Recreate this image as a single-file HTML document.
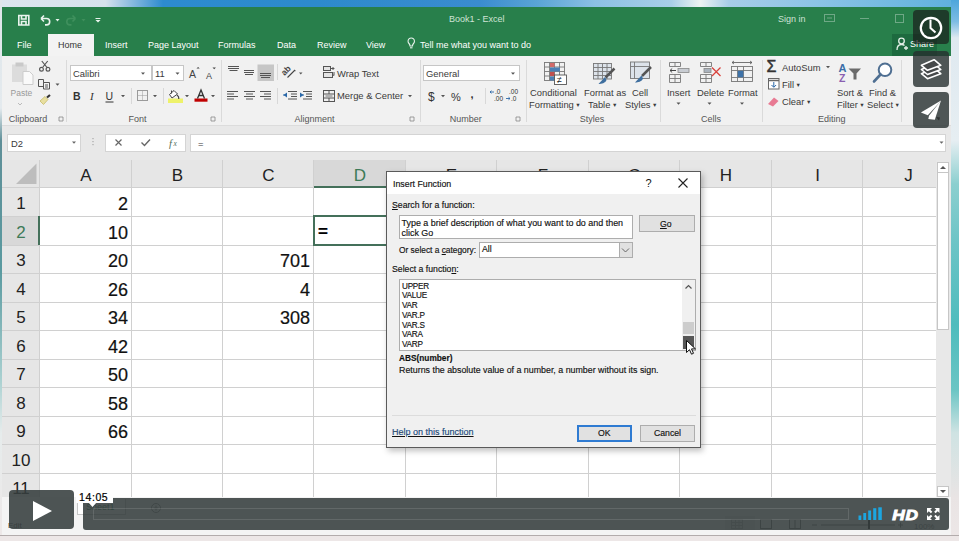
<!DOCTYPE html>
<html><head><meta charset="utf-8">
<style>
*{margin:0;padding:0;box-sizing:border-box}
html,body{width:959px;height:541px;overflow:hidden;background:#f4eeee;font-family:"Liberation Sans",sans-serif;position:relative}
.a{position:absolute}
.t{position:absolute;white-space:nowrap;line-height:1}
#bg{left:0;top:0;width:959px;height:541px;background:linear-gradient(90deg,#dce6ee 0%,#d6e2ec 11%,#2d8bcf 17%,#2d8acc 33%,#3a8ccf 50%,#5aa4d6 56%,#8cc0e4 62%,#a9cfe8 70%,#eef3f2 73%,#a8cde8 76%,#8cc4e6 85%,#5db0dd 100%)}
#rbg{left:951px;top:0;width:8px;height:541px;background:linear-gradient(180deg,#4da6dc 0%,#7dbce4 4%,#dfe9f0 7%,#e6eef2 26%,#8ccfcf 34%,#6cc4c6 45%,#4fbcbd 60%,#6ac5c4 72%,#cfe3e3 80%,#e9e4e4 92%,#ede7e7 100%)}
#bot{left:0;top:534.5px;width:959px;height:7px;background:#ede7e7;border-top:1px solid #b3acac}
#title{left:2px;top:7px;width:949px;height:49px;background:#287f4b}
.wt{color:#fff;font-size:9px}
#ribbon{left:2px;top:56px;width:949px;height:70px;background:#f1f1f1;border-bottom:1px solid #dcdcdc}
#fbar{left:2px;top:126px;width:949px;height:34px;background:#e8e8e8}
#grid{left:2px;top:160px;width:934px;height:337px;background:#fff}
.rt{color:#3a3a3a;font-size:9.4px}
.grp{color:#555;font-size:9px}
.sep{position:absolute;width:1px;background:#dadada}
.hdr{position:absolute;background:#e6e6e6}
.vl{position:absolute;width:1px;background:#d0d0d0}
.hl{position:absolute;height:1px;background:#d0d0d0}
.num{position:absolute;font-size:18px;color:#111;line-height:1;white-space:nowrap;-webkit-text-stroke:0.2px #111}
.dt{position:absolute;font-size:8.7px;color:#111;-webkit-text-stroke:0.15px #111;line-height:1;white-space:nowrap}
</style></head><body>
<div id="bg" class="a"></div>
<div class="a" style="left:0;top:0;width:2px;height:541px;background:linear-gradient(180deg,#dfe6ea 0%,#e4eaee 20%,#5f8f98 26%,#5a9aa0 50%,#a9d0d0 70%,#e6ecec 80%,#eee8e8 100%)"></div>
<div id="rbg" class="a"></div>
<div id="bot" class="a"></div>

<!-- title bar -->
<div id="title" class="a"></div>
<div class="a" style="left:48px;top:34px;width:46px;height:22px;background:#f3f3f3"></div>
<div class="t wt" style="left:17px;top:41px">File</div>
<div class="t" style="left:58px;top:41px;font-size:9px;color:#333">Home</div>
<div class="t wt" style="left:105px;top:41px">Insert</div>
<div class="t wt" style="left:148px;top:41px">Page Layout</div>
<div class="t wt" style="left:218px;top:41px">Formulas</div>
<div class="t wt" style="left:277px;top:41px">Data</div>
<div class="t wt" style="left:317px;top:41px">Review</div>
<div class="t wt" style="left:366px;top:41px">View</div>
<div class="t wt" style="left:420px;top:41px">Tell me what you want to do</div>
<div class="t wt" style="left:449px;top:15px;color:#cfe3d6">Book1 - Excel</div>
<div class="t wt" style="left:778px;top:15px;color:#cfe3d6">Sign in</div>
<div class="a" style="left:892px;top:34px;width:45px;height:22px;background:#1d6a3f"></div>
<div class="t wt" style="left:910px;top:40px">Share</div>

<!-- ribbon -->
<div id="ribbon" class="a"></div>
<div class="sep" style="left:66px;top:60px;height:62px"></div>
<div class="sep" style="left:221px;top:60px;height:62px"></div>
<div class="sep" style="left:420px;top:60px;height:62px"></div>
<div class="sep" style="left:526px;top:60px;height:62px"></div>
<div class="sep" style="left:660px;top:60px;height:62px"></div>
<div class="sep" style="left:762px;top:60px;height:62px"></div>
<div class="sep" style="left:901px;top:60px;height:62px"></div>
<div class="t grp" style="left:-22px;width:100px;text-align:center;top:114.5px">Clipboard</div>
<div class="t grp" style="left:87.5px;width:100px;text-align:center;top:114.5px">Font</div>
<div class="t grp" style="left:264.4px;width:100px;text-align:center;top:114.5px">Alignment</div>
<div class="t grp" style="left:415.8px;width:100px;text-align:center;top:114.5px">Number</div>
<div class="t grp" style="left:542px;width:100px;text-align:center;top:114.5px">Styles</div>
<div class="t grp" style="left:661px;width:100px;text-align:center;top:114.5px">Cells</div>
<div class="t grp" style="left:781.7px;width:100px;text-align:center;top:114.5px">Editing</div>
<div class="a" style="left:70px;top:65px;width:82px;height:16px;background:#fff;border:1px solid #c6c6c6"></div>
<div class="a" style="left:152px;top:65px;width:32px;height:16px;background:#fff;border:1px solid #c6c6c6"></div>
<div class="t rt" style="left:73px;top:69px">Calibri</div>
<div class="t rt" style="left:155px;top:69px">11</div>
<div class="a" style="left:423px;top:65px;width:97px;height:16px;background:#fff;border:1px solid #c6c6c6"></div>
<div class="t rt" style="left:426px;top:69px">General</div>
<div class="t rt" style="left:337px;top:69px">Wrap Text</div>
<div class="t rt" style="left:337px;top:91px">Merge &amp; Center</div>
<div class="t rt" style="left:10.5px;top:89px;color:#999;font-size:8.5px">Paste</div>
<div class="t rt" style="left:530px;top:88px">Conditional</div>
<div class="t rt" style="left:529px;top:100px">Formatting<span style="font-size:5.5px;vertical-align:1.5px"> ▼</span></div>
<div class="t rt" style="left:584px;top:88px">Format as</div>
<div class="t rt" style="left:588px;top:100px">Table<span style="font-size:5.5px;vertical-align:1.5px"> ▼</span></div>
<div class="t rt" style="left:632px;top:88px">Cell</div>
<div class="t rt" style="left:625px;top:100px">Styles<span style="font-size:5.5px;vertical-align:1.5px"> ▼</span></div>
<div class="t rt" style="left:667px;top:88px">Insert</div>
<div class="t rt" style="left:697px;top:88px">Delete</div>
<div class="t rt" style="left:728px;top:88px">Format</div>
<div class="t rt" style="left:782px;top:63px">AutoSum</div>
<div class="t rt" style="left:782px;top:80px">Fill<span style="font-size:5.5px;vertical-align:1.5px"> ▼</span></div>
<div class="t rt" style="left:782px;top:97px">Clear<span style="font-size:5.5px;vertical-align:1.5px"> ▼</span></div>
<div class="t rt" style="left:837px;top:88px">Sort &amp;</div>
<div class="t rt" style="left:837px;top:100px">Filter<span style="font-size:5.5px;vertical-align:1.5px"> ▼</span></div>
<div class="t rt" style="left:869px;top:88px">Find &amp;</div>
<div class="t rt" style="left:867px;top:100px">Select<span style="font-size:5.5px;vertical-align:1.5px"> ▼</span></div>

<!-- formula bar -->
<div id="fbar" class="a"></div>
<div class="a" style="left:7px;top:134px;width:74px;height:18px;background:#fff;border:1px solid #d4d4d4"></div>
<div class="t rt" style="left:11px;top:139px">D2</div>
<div class="a" style="left:105px;top:134px;width:81px;height:18px;background:#fff;border:1px solid #d4d4d4"></div>
<div class="a" style="left:190px;top:134px;width:756px;height:18px;background:#fff;border:1px solid #d4d4d4"></div>
<div class="t rt" style="left:198px;top:139px">=</div>

<svg class="a" style="left:0;top:0" width="959" height="160" viewBox="0 0 959 160">
<g fill="none" stroke="#eaf4ee" stroke-width="1.6">
 <!-- save -->
 <path d="M18.8 15.5h10v9.5h-10z"/>
 <path d="M21.5 15.5v3.5h4.5v-3.5M21.5 25v-3.5h4.5v3.5"/>
 <!-- undo -->
 <path d="M41 18.5l3-3M41 18.5l3 3M41.5 18.5h5a3.2 3.2 0 0 1 0 6.4h-1.5"/>
</g>
<path d="M55.5 19h4l-2 2.5z" fill="#eaf4ee"/>
<g fill="none" stroke="#3f905d" stroke-width="1.6">
 <path d="M75.5 18.5l-3-3M75.5 18.5l-3 3M75 18.5h-5a3.2 3.2 0 0 0 0 6.4h1.5"/>
</g>
<path d="M81.5 19h4l-2 2.5z" fill="#3f8f5c"/>
<path d="M95.5 18h5v1h-5zM95.5 20h5l-2.5 2.5z" fill="#eaf4ee"/>
<!-- window controls -->
<g fill="none" stroke="#6fa886" stroke-width="1">
 <rect x="824.5" y="14.5" width="10" height="7"/>
 <path d="M827 18h5"/>
 <path d="M860 18.5h9"/>
 <rect x="895.5" y="14.5" width="8" height="8"/>
</g>
<!-- share person -->
<g fill="none" stroke="#e3efe7" stroke-width="1.3">
 <circle cx="901.5" cy="41" r="2.8"/>
 <path d="M897 50c0-3.5 2-5.5 4.5-5.5 1.5 0 2.5.5 3 1"/>
 <path d="M904 48h4M906 46v4"/>
</g>
<!-- lightbulb -->
<g fill="none" stroke="#eaf4ee" stroke-width="1.1">
 <path d="M409 43.5a3.2 3.2 0 1 1 4.5 0c-.8.8-1 1.5-1 2.5h-2.5c0-1-.2-1.7-1-2.5z"/>
 <path d="M410 47.8h2.5"/>
</g>

<!-- CLIPBOARD -->
<rect x="12" y="64.5" width="15" height="17.5" fill="#dcdcdc"/>
<rect x="15.5" y="62.5" width="8" height="4" fill="#c9c9c9"/>
<path d="M23 71.5h6.5l3.5 3.5v9.5h-10z" fill="#fafafa" stroke="#cdcdcd" stroke-width="1"/>
<path d="M18 103l2 2 2-2" fill="none" stroke="#bbb" stroke-width="1"/>
<g fill="none" stroke="#555" stroke-width="1.2">
 <circle cx="41.5" cy="69.3" r="1.9"/><circle cx="48" cy="69.3" r="1.9"/>
 <path d="M42.5 67.5l5.2-6.5M47 67.5l-5.2-6.5"/>
</g>
<g fill="none" stroke="#555" stroke-width="1">
 <path d="M38.5 79.5h5v7h-5z"/>
 <path d="M43.5 82.5h6v6.5h-6z" fill="#f3f3f3"/>
 <path d="M45 85h3M45 87h3"/>
</g>
<path d="M55.5 83.5h4l-2 2.2z" fill="#555"/>
<path d="M40 101l5-4.5 3 3-4.5 5z" fill="#e8dfa0" stroke="#c7bb6a" stroke-width=".8"/>
<path d="M47 97.5l3-2.5" stroke="#333" stroke-width="2.2"/>

<!-- FONT -->
<path d="M141 72.5h4l-2 2.2zM175.5 72.5h4l-2 2.2z" fill="#555"/>
<text x="189" y="78" font-family="Liberation Sans" font-size="10.5" fill="#444">A</text>
<path d="M196.5 68.5l1.6-1.6 1.6 1.6z" fill="#444"/>
<text x="206" y="78.5" font-family="Liberation Sans" font-size="9" fill="#444">A</text>
<path d="M212.5 67.5h3.4l-1.7 1.7z" fill="#444"/>
<text x="73" y="100" font-family="Liberation Sans" font-size="10.5" font-weight="bold" fill="#333">B</text>
<text x="90" y="100" font-family="Liberation Serif" font-size="11" font-style="italic" fill="#333">I</text>
<text x="105.5" y="99.5" font-family="Liberation Sans" font-size="10.5" fill="#333">U</text>
<path d="M105.5 102h8" stroke="#333" stroke-width="1"/>
<path d="M121 95h4l-2 2.2zM153 95h4l-2 2.2zM185 95h4l-2 2.2zM211 95h4l-2 2.2z" fill="#555"/>
<path d="M131.5 88v16M163.5 88v16" stroke="#d8d8d8" stroke-width="1"/>
<g fill="none" stroke="#9a9a9a" stroke-width="1">
 <rect x="137.5" y="90.5" width="10" height="10"/>
 <path d="M142.5 90.5v10M137.5 95.5h10" stroke-dasharray="1 1"/>
</g>
<rect x="168" y="98.5" width="15" height="4.5" fill="#eef26a"/>
<path d="M172 98l-2.5-3.5 4.5-4 3.5 3.5z" fill="#fff" stroke="#444" stroke-width="1"/>
<path d="M171.5 90.5v3" stroke="#444" stroke-width="1"/>
<path d="M177 95c1.5 1 2 2.5 1.8 4" fill="none" stroke="#444" stroke-width="1.2"/>
<rect x="194.5" y="98.5" width="13" height="3.2" fill="#c00000"/>
<path d="M197.5 98.5l3.5-8.5 3.5 8.5M198.8 95.5h4.5" fill="none" stroke="#333" stroke-width="1.3"/>
<path d="M211 117h4v4h-4z" fill="none" stroke="#888" stroke-width=".8"/>
<path d="M59 117h4v4h-4z" fill="none" stroke="#888" stroke-width=".8"/>

<!-- ALIGNMENT -->
<rect x="257.5" y="64.5" width="16.5" height="16.5" fill="#c6c6c6"/>
<g stroke="#555" stroke-width="1">
 <path d="M228 66.5h11M228 68.5h11M229.5 70.5h8"/>
 <path d="M244 70.5h10M244 72.5h10M245 74.5h8"/>
 <path d="M260 73.5h11M260 75.5h11M261 77.5h9"/>
 <path d="M227 91.5h11M227 94h7M227 96.5h11M227 99h7"/>
 <path d="M244 91.5h11M246 94h7M244 96.5h11M246 99h7"/>
 <path d="M260 91.5h11M264 94h7M260 96.5h11M264 99h7"/>
 <path d="M288 91.5h9M291 94h6M291 96.5h6M288 99h9"/>
 <path d="M303 91.5h9M306 94h6M306 96.5h6M303 99h9"/>
</g>
<path d="M283.5 95l3.5-2.5v5zM300 92.5l3.5 2.5-3.5 2.5z" fill="#2b68a8"/>
<path d="M283 95h4M300 95h4" stroke="#2b68a8" stroke-width="1"/>
<path d="M277.5 64v16M277.5 88v16" stroke="#d8d8d8"/>
<text x="0" y="0" font-family="Liberation Sans" font-size="8.5" font-weight="bold" fill="#444" transform="translate(284.5 76) rotate(-45)">ab</text>
<path d="M287.5 77.5l7.5-7.5" stroke="#444" stroke-width="1.1"/>
<path d="M294.5 70.8l1.2-.5-.5 1.2z" fill="#444"/>
<path d="M299 72.5h3.5l-1.75 2z" fill="#555"/>
<path d="M408 95h4l-2 2.2z" fill="#555"/>
<g fill="none" stroke="#555" stroke-width="1">
 <rect x="323.5" y="66.5" width="7" height="4" fill="#e4e4e4"/>
 <rect x="323.5" y="72.5" width="9" height="5" fill="#e4e4e4"/>
 <path d="M331 68.5h3M332.5 67l1.5 1.5-1.5 1.5"/>
 <path d="M334 72v3.5l-1.5-1"/>
 <rect x="323.5" y="90.5" width="11" height="11"/>
 <path d="M323.5 94h11M323.5 98h11M329 90.5v3.5M329 98v3.5"/>
 <path d="M325.5 96h7" stroke-width=".8"/>
</g>
<path d="M410 117h4v4h-4zM516 117h4v4h-4z" fill="none" stroke="#888" stroke-width=".8"/>

<!-- NUMBER -->
<path d="M511 72.5h4l-2 2.2z" fill="#555"/>
<text x="428" y="101" font-family="Liberation Sans" font-size="12" fill="#333">$</text>
<path d="M441 95h4l-2 2.2z" fill="#555"/>
<text x="451" y="100.5" font-family="Liberation Sans" font-size="11" fill="#333">%</text>
<text x="470.5" y="98" font-family="Liberation Sans" font-size="11" font-weight="bold" fill="#333">,</text>
<path d="M485.5 88v16" stroke="#d8d8d8"/>
<text x="495" y="94" font-family="Liberation Sans" font-size="6.5" fill="#333">.0</text>
<text x="494" y="100.5" font-family="Liberation Sans" font-size="6.5" fill="#333">.00</text>
<path d="M490 92h4M490 92l1.5-1.3M490 92l1.5 1.3" stroke="#2b68a8" stroke-width=".9" fill="none"/>
<text x="509" y="94" font-family="Liberation Sans" font-size="6.5" fill="#333">.00</text>
<text x="511" y="100.5" font-family="Liberation Sans" font-size="6.5" fill="#333">.0</text>
<path d="M506 98.5h4M510 98.5l-1.5-1.3M510 98.5l-1.5 1.3" stroke="#2b68a8" stroke-width=".9" fill="none"/>

<!-- STYLES -->
<g fill="none" stroke="#777" stroke-width=".9">
 <rect x="544.5" y="62.5" width="20" height="18"/>
 <path d="M544.5 67h20M544.5 71.5h20M544.5 76h20M549.5 62.5v18M554.5 62.5v18M559.5 62.5v18"/>
</g>
<rect x="550" y="63" width="4.5" height="4" fill="#d26a6a"/>
<rect x="550" y="67.5" width="10" height="4" fill="#4c7fb5"/>
<rect x="550" y="72" width="4.5" height="4" fill="#c05050"/>
<rect x="550" y="76.5" width="4.5" height="4" fill="#4c7fb5"/>
<rect x="554.5" y="75" width="12" height="9.5" fill="#fff" stroke="#555" stroke-width=".9"/>
<text x="557" y="83" font-family="Liberation Sans" font-size="9" fill="#222">≠</text>
<g fill="none" stroke="#777" stroke-width=".9">
 <rect x="593.5" y="63.5" width="18" height="15.5" fill="#dde3ea"/>
 <path d="M593.5 67.5h18M593.5 71.5h18M593.5 75.5h18M598 63.5v15.5M602.5 63.5v15.5M607 63.5v15.5"/>
 <rect x="630.5" y="62" width="19" height="16.5" fill="#dde3ea"/>
 <path d="M630.5 66.5h19M634.5 62v16.5"/>
</g>
<path d="M614.5 68.5l-9 9" stroke="#555" stroke-width="2.5"/>
<path d="M605 77l-6.5 7c3 0 7-1 8-4z" fill="#3f6f9f"/>
<path d="M651 67l-9 9" stroke="#555" stroke-width="2.5"/>
<path d="M641.5 75.5l-6.5 7c3 0 7-1 8-4z" fill="#3f6f9f"/>


<!-- CELLS -->
<g fill="none" stroke="#777" stroke-width=".9">
 <path d="M669.5 62.5h11v4h-11zM675 62.5v4"/>
 <path d="M669.5 74.5h11v8h-11zM675 74.5v8M669.5 78.5h11"/>
 <path d="M700.5 62.5h11v4h-11zM706 62.5v4"/>
 <path d="M700.5 74.5h11v8h-11zM706 74.5v8M700.5 78.5h11"/>
 <rect x="731.5" y="66.5" width="21" height="15"/>
 <path d="M731.5 70.5h21M731.5 77.5h21M737.5 66.5v15M743.5 66.5v15"/>
</g>
<rect x="678" y="68.5" width="11" height="4" fill="#c8ccd2" stroke="#888" stroke-width=".8"/>
<path d="M670 70.5h6M670 70.5l2.2-2M670 70.5l2.2 2" stroke="#444" stroke-width="1" fill="none"/>
<rect x="704" y="68.5" width="7" height="4" fill="#aab3bd" stroke="#888" stroke-width=".8"/>
<path d="M712 67.5l8.5 8.5M720.5 67.5l-8.5 8.5" stroke="#d9423c" stroke-width="1.3"/>
<rect x="737.8" y="70.8" width="5.5" height="6.5" fill="#3e72a8"/>
<path d="M732 62.5h20M732 62.5l2-1.5M732 62.5l2 1.5M752 62.5l-2-1.5M752 62.5l-2 1.5" stroke="#555" stroke-width=".8" fill="none"/>
<path d="M676.5 102.5h4l-2 2.2zM707.5 102.5h4l-2 2.2zM740 102.5h4l-2 2.2z" fill="#555"/>

<!-- EDITING -->
<text x="766.5" y="72" font-family="Liberation Sans" font-size="16" fill="#333" stroke="#333" stroke-width="0.5">Σ</text>
<path d="M826 66h4l-2 2.2z" fill="#555"/>
<rect x="768.5" y="78.5" width="10.5" height="10.5" fill="#fff" stroke="#666" stroke-width="1"/>
<path d="M768.5 80.5h10.5" stroke="#666" stroke-width="1.5"/>
<path d="M773.8 82v5M771.5 85l2.3 2.3 2.3-2.3" stroke="#2b68a8" stroke-width="1" fill="none"/>
<path d="M768 104l6-6.5 4.5 3.5-5.5 5.5z" fill="#e87a93"/>
<text x="838.5" y="71.5" font-family="Liberation Sans" font-size="11" font-weight="bold" fill="#3a6ea8">A</text>
<text x="839" y="81.5" font-family="Liberation Sans" font-size="10.5" font-weight="bold" fill="#8a5fb0">Z</text>
<path d="M848.5 68.5h12.5l-4.5 5v6l-3 0v-6z" fill="#6b6b6b"/>
<circle cx="885" cy="69.8" r="6.3" fill="#fff" stroke="#4f6f92" stroke-width="2"/>
<path d="M880.5 74.5l-6.5 7" stroke="#4f6f92" stroke-width="2.6" stroke-linecap="round"/>

<!-- formula bar icons -->
<path d="M72 141.5h4l-2 2.2z" fill="#666"/>
<path d="M93 138v1.2M93 141v1.2M93 144v1.2" stroke="#999" stroke-width="1"/>
<path d="M115.5 139.5l6 6M121.5 139.5l-6 6" stroke="#666" stroke-width="1.2"/>
<path d="M141.5 142.5l3 3 5.5-6" fill="none" stroke="#666" stroke-width="1.4"/>
<text x="169" y="146.5" font-family="Liberation Serif" font-size="10.5" font-style="italic" fill="#4f6f5c">f</text>
<text x="173.5" y="146" font-family="Liberation Serif" font-size="7.5" font-style="italic" fill="#4f6f5c">x</text>
<path d="M939.5 141.5h4l-2 2.2z" fill="#666"/>
<!-- corner triangle -->
<path d="M36 167v17h-17z" fill="#bdbdbd"/>
</svg>

<!-- grid -->
<div id="grid" class="a"></div>
<div class="hdr" style="left:2px;top:160px;width:934px;height:27px"></div>
<div class="hdr" style="left:2px;top:187px;width:38px;height:310px"></div>
<div class="a" style="left:314px;top:160px;width:92px;height:27px;background:#d8d8d8"></div>
<div class="a" style="left:2px;top:216px;width:38px;height:29px;background:#d8d8d8"></div>
<div class="vl" style="left:39px;top:160px;height:337px"></div>
<div class="vl" style="left:131px;top:160px;height:337px"></div>
<div class="vl" style="left:222px;top:160px;height:337px"></div>
<div class="vl" style="left:313px;top:160px;height:337px"></div>
<div class="vl" style="left:405px;top:160px;height:337px"></div>
<div class="vl" style="left:496px;top:160px;height:337px"></div>
<div class="vl" style="left:588px;top:160px;height:337px"></div>
<div class="vl" style="left:679px;top:160px;height:337px"></div>
<div class="vl" style="left:771px;top:160px;height:337px"></div>
<div class="vl" style="left:862px;top:160px;height:337px"></div>
<div class="hl" style="left:2px;top:187px;width:934px"></div>
<div class="hl" style="left:2px;top:216px;width:934px"></div>
<div class="hl" style="left:2px;top:245px;width:934px"></div>
<div class="hl" style="left:2px;top:273px;width:934px"></div>
<div class="hl" style="left:2px;top:302px;width:934px"></div>
<div class="hl" style="left:2px;top:330px;width:934px"></div>
<div class="hl" style="left:2px;top:359px;width:934px"></div>
<div class="hl" style="left:2px;top:387px;width:934px"></div>
<div class="hl" style="left:2px;top:416px;width:934px"></div>
<div class="hl" style="left:2px;top:444px;width:934px"></div>
<div class="hl" style="left:2px;top:473px;width:934px"></div>
<div class="hl" style="left:2px;top:501px;width:934px"></div>
<div class="num" style="left:46.0px;width:80px;text-align:center;top:167.0px;font-size:17px;-webkit-text-stroke:0;color:#222">A</div>
<div class="num" style="left:137.5px;width:80px;text-align:center;top:167.0px;font-size:17px;-webkit-text-stroke:0;color:#222">B</div>
<div class="num" style="left:228.5px;width:80px;text-align:center;top:167.0px;font-size:17px;-webkit-text-stroke:0;color:#222">C</div>
<div class="num" style="left:320.0px;width:80px;text-align:center;top:167.0px;font-size:17px;-webkit-text-stroke:0;color:#3d7a57">D</div>
<div class="num" style="left:411.5px;width:80px;text-align:center;top:167.0px;font-size:17px;-webkit-text-stroke:0;color:#222">E</div>
<div class="num" style="left:503.0px;width:80px;text-align:center;top:167.0px;font-size:17px;-webkit-text-stroke:0;color:#222">F</div>
<div class="num" style="left:594.5px;width:80px;text-align:center;top:167.0px;font-size:17px;-webkit-text-stroke:0;color:#222">G</div>
<div class="num" style="left:686.0px;width:80px;text-align:center;top:167.0px;font-size:17px;-webkit-text-stroke:0;color:#222">H</div>
<div class="num" style="left:777.5px;width:80px;text-align:center;top:167.0px;font-size:17px;-webkit-text-stroke:0;color:#222">I</div>
<div class="num" style="left:868.5px;width:80px;text-align:center;top:167.0px;font-size:17px;-webkit-text-stroke:0;color:#222">J</div>
<div class="num" style="left:2px;width:38px;text-align:center;top:194.5px;font-size:17px;-webkit-text-stroke:0;color:#222">1</div>
<div class="num" style="left:2px;width:38px;text-align:center;top:223.5px;font-size:17px;-webkit-text-stroke:0;color:#3d7a57">2</div>
<div class="num" style="left:2px;width:38px;text-align:center;top:252.0px;font-size:17px;-webkit-text-stroke:0;color:#222">3</div>
<div class="num" style="left:2px;width:38px;text-align:center;top:280.5px;font-size:17px;-webkit-text-stroke:0;color:#222">4</div>
<div class="num" style="left:2px;width:38px;text-align:center;top:309.0px;font-size:17px;-webkit-text-stroke:0;color:#222">5</div>
<div class="num" style="left:2px;width:38px;text-align:center;top:337.5px;font-size:17px;-webkit-text-stroke:0;color:#222">6</div>
<div class="num" style="left:2px;width:38px;text-align:center;top:366.0px;font-size:17px;-webkit-text-stroke:0;color:#222">7</div>
<div class="num" style="left:2px;width:38px;text-align:center;top:394.5px;font-size:17px;-webkit-text-stroke:0;color:#222">8</div>
<div class="num" style="left:2px;width:38px;text-align:center;top:423.0px;font-size:17px;-webkit-text-stroke:0;color:#222">9</div>
<div class="num" style="left:2px;width:38px;text-align:center;top:451.5px;font-size:17px;-webkit-text-stroke:0;color:#222">10</div>
<div class="num" style="left:2px;width:38px;text-align:center;top:480.0px;font-size:17px;-webkit-text-stroke:0;color:#222">11</div>
<div class="num" style="left:40px;width:88px;text-align:right;top:194.5px">2</div>
<div class="num" style="left:40px;width:88px;text-align:right;top:223.5px">10</div>
<div class="num" style="left:40px;width:88px;text-align:right;top:252.0px">20</div>
<div class="num" style="left:40px;width:88px;text-align:right;top:280.5px">26</div>
<div class="num" style="left:40px;width:88px;text-align:right;top:309.0px">34</div>
<div class="num" style="left:40px;width:88px;text-align:right;top:337.5px">42</div>
<div class="num" style="left:40px;width:88px;text-align:right;top:366.0px">50</div>
<div class="num" style="left:40px;width:88px;text-align:right;top:394.5px">58</div>
<div class="num" style="left:40px;width:88px;text-align:right;top:423.0px">66</div>
<div class="num" style="left:223px;width:87px;text-align:right;top:252.0px">701</div>
<div class="num" style="left:223px;width:87px;text-align:right;top:280.5px">4</div>
<div class="num" style="left:223px;width:87px;text-align:right;top:309.0px">308</div>

<div class="a" style="left:314px;top:185.5px;width:92px;height:2px;background:#44705a"></div>
<div class="a" style="left:38px;top:216px;width:2px;height:29px;background:#44705a"></div>
<svg class="a" style="left:0;top:160px" width="40" height="27"><path d="M36.5 3.5v20.5h-20.5z" fill="#bdbdbd"/></svg>
<!-- vertical scrollbar -->
<div class="a" style="left:936px;top:152px;width:15px;height:345px;background:#e8e8e8"></div>
<div class="a" style="left:937px;top:162px;width:12px;height:11px;background:#fff;border:1px solid #c6c6c6"></div>
<svg class="a" style="left:937px;top:162px" width="12" height="11"><path d="M3 7l3-3 3 3z" fill="#555"/></svg>
<div class="a" style="left:937px;top:173px;width:12px;height:157px;background:#fff;border:1px solid #c6c6c6;border-top:none"></div>
<div class="a" style="left:937px;top:486px;width:12px;height:11px;background:#fff;border:1px solid #c6c6c6"></div>
<svg class="a" style="left:937px;top:486px" width="12" height="11"><path d="M3 4l3 3 3-3z" fill="#555"/></svg>

<!-- selected cell -->
<div class="a" style="left:313px;top:215px;width:94px;height:31px;border:2px solid #44705a"></div>
<div class="num" style="left:318px;top:223px;font-size:17px;font-weight:bold;color:#000">=</div>

<!-- dialog -->
<div class="a" style="left:386px;top:171px;width:315px;height:277px;background:#f0f0f0;border:1px solid #5a5a5a;box-shadow:2px 3px 6px rgba(0,0,0,0.25)"></div>
<div class="a" style="left:387px;top:172px;width:313px;height:22px;background:#fff"></div>
<div class="dt" style="left:393px;top:180px;font-size:8.8px">Insert Function</div>
<div class="dt" style="left:645.5px;top:177.5px;font-size:11px;-webkit-text-stroke:0">?</div>
<svg class="a" style="left:676px;top:176px" width="14" height="14"><path d="M2.5 2.5l9 9M11.5 2.5l-9 9" stroke="#222" stroke-width="1.1"/></svg>
<div class="dt" style="left:392px;top:201px"><u>S</u>earch for a function:</div>
<div class="a" style="left:399px;top:215px;width:234px;height:24px;background:#fff;border:1px solid #adadad"></div>
<div class="dt" style="left:401.5px;top:219px;font-size:8.95px">Type a brief description of what you want to do and then</div>
<div class="dt" style="left:401.5px;top:229px;font-size:8.95px">click Go</div>
<div class="a" style="left:639px;top:215px;width:56px;height:17px;background:#e1e1e1;border:1px solid #adadad"></div>
<div class="dt" style="left:660px;top:220px"><u>G</u>o</div>
<div class="dt" style="left:399px;top:245.5px;font-size:8.35px">Or select a <u>c</u>ategory:</div>
<div class="a" style="left:479px;top:242px;width:154px;height:16px;background:#fff;border:1px solid #adadad"></div>
<div class="a" style="left:619px;top:243px;width:13px;height:14px;background:#e1e1e1;border-left:1px solid #adadad"></div>
<div class="dt" style="left:482px;top:245px">All</div>
<div class="dt" style="left:392px;top:265px">Select a functio<u>n</u>:</div>
<div class="a" style="left:399px;top:279px;width:297px;height:72px;background:#fff;border:1px solid #adadad"></div>
<div class="a" style="left:682px;top:280px;width:13px;height:70px;background:#f0f0f0"></div>
<div class="a" style="left:683px;top:322px;width:11px;height:12px;background:#cdcdcd"></div>
<div class="a" style="left:683px;top:336px;width:11px;height:13px;background:#575757"></div>
<svg class="a" style="left:682px;top:280px" width="13" height="12"><path d="M3.5 8.5l3-3 3 3" fill="none" stroke="#555" stroke-width="1.2"/></svg>
<svg class="a" style="left:619px;top:243px" width="13" height="14"><path d="M3 5.5l3.5 3.5 3.5-3.5" fill="none" stroke="#666" stroke-width="1"/></svg>
<svg class="a" style="left:685px;top:339px" width="12" height="17"><path d="M1.5 1.5v12l3-2.8 2 4.5 2-.9-2-4.4h4z" fill="#fff" stroke="#111" stroke-width="1"/></svg>
<div class="dt" style="left:402px;top:281.5px;line-height:9.75px;font-size:8.2px;letter-spacing:-0.25px">UPPER<br>VALUE<br>VAR<br>VAR.P<br>VAR.S<br>VARA<br>VARP</div>
<div class="dt" style="left:399px;top:354px;font-weight:bold;font-size:8.3px">ABS(number)</div>
<div class="dt" style="left:399px;top:366px;font-size:8.85px">Returns the absolute value of a number, a number without its sign.</div>
<div class="a" style="left:392px;top:415px;width:304px;height:1px;background:#dcdcdc"></div>
<div class="dt" style="left:392px;top:427.5px;color:#1d5fa8;font-size:9px"><u>Help on this function</u></div>
<div class="a" style="left:577px;top:425px;width:55px;height:17px;background:#e1e1e1;border:2px solid #2f7bd2"></div>
<div class="dt" style="left:598px;top:429px">OK</div>
<div class="a" style="left:640px;top:425px;width:55px;height:17px;background:#e1e1e1;border:1px solid #adadad"></div>
<div class="dt" style="left:654px;top:429px">Cancel</div>

<!-- sheet tabs / status bar -->
<div class="a" style="left:2px;top:497px;width:949px;height:38px;background:#f4f4f4"></div>


<!-- sheet tab under overlay -->
<div class="a" style="left:77px;top:499px;width:49px;height:16px;background:#fff;border:1px solid #c6c6c6;border-top:none"></div>
<div class="t" style="left:86px;top:503px;font-size:9px;color:#217346">Sheet1</div>

<svg class="a" style="left:150px;top:502px" width="12" height="12"><circle cx="6" cy="6" r="4.5" fill="none" stroke="#888"/><path d="M6 3.5v5M3.5 6h5" stroke="#888"/></svg>
<div class="t" style="left:8px;top:522px;font-size:8px;color:#444">Edit</div>
<svg class="a" style="left:700px;top:516px" width="236" height="16"><g fill="none" stroke="#777" stroke-width="1"><rect x="31.5" y="3.5" width="11" height="9"/><path d="M31.5 6.5h11M31.5 9.5h11M35.5 3.5v9M39 3.5v9"/><rect x="60.5" y="3.5" width="11" height="9"/><rect x="89.5" y="3.5" width="11" height="9"/><path d="M95 3.5v9"/><path d="M112 9h5M198 9h5M200.5 6.5v5M121 9h74"/></g><rect x="168" y="4" width="2" height="9" fill="#222"/><text x="214" y="13" font-family="Liberation Sans" font-size="8" fill="#777">100%</text></svg>
<div class="a" style="left:725px;top:516px;width:30px;height:14px;background:#d8d8d8;opacity:.6"></div>
<!-- video overlay -->
<div class="a" style="left:9px;top:490px;width:65px;height:39px;background:rgba(54,62,61,0.88);border-radius:4px"></div>
<svg class="a" style="left:33px;top:501px" width="20" height="20"><path d="M0 0L19 10L0 20Z" fill="#fff"/></svg>
<div class="a" style="left:83px;top:498px;width:866px;height:32px;background:rgba(54,62,61,0.88);border-radius:3px"></div>
<div class="a" style="left:93px;top:508px;width:756px;height:12px;border:1px solid rgba(255,255,255,0.12)"></div>
<div class="a" style="left:76px;top:491px;width:37px;height:12px;background:#fff"></div>
<svg class="a" style="left:88px;top:502px" width="10" height="6"><path d="M0 0h9l-4.5 5z" fill="#fff"/></svg>
<div class="t" style="left:79px;top:492px;font-size:10.5px;color:#000;letter-spacing:0.6px;-webkit-text-stroke:0.2px #000">14:05</div>

<!-- sidebar buttons -->
<div class="a" style="left:913px;top:10px;width:36px;height:34px;background:rgba(27,27,27,0.68);border-radius:4px"></div>
<svg class="a" style="left:913px;top:10px" width="36" height="34"><circle cx="18" cy="18" r="10.2" fill="none" stroke="#fff" stroke-width="2.2"/><path d="M17.5 9.5v8.5l5 4.5" fill="none" stroke="#fff" stroke-width="2"/></svg>
<div class="a" style="left:913px;top:51px;width:36px;height:36px;background:rgba(39,48,48,0.8);border-radius:4px"></div>
<svg class="a" style="left:913px;top:52px" width="36" height="34"><g fill="#46494a" stroke="#fff" stroke-width="1.6" stroke-linejoin="round"><path d="M8.4 21.7L21.1 16.1 27.8 21.7 14.5 26.7z"/><path d="M8.4 17.5L21.1 11.9 27.8 17.5 14.5 22.5z"/><path d="M8.4 13.3L21.1 7.7 27.8 13.3 14.5 18.3z"/></g></svg>
<div class="a" style="left:913px;top:92px;width:36px;height:36px;background:rgba(39,48,48,0.8);border-radius:4px"></div>
<svg class="a" style="left:913px;top:92px" width="36" height="36"><path d="M28 8.6L7.9 20.5 14.8 23.2 27 10z" fill="#fff"/><path d="M28 8.6L16 23.8 15.3 27 21.8 27.8z" fill="#fff"/><path d="M23 25l3 3.5 1-3z" fill="#2e3131"/></svg>
<!-- bottom right icons -->
<svg class="a" style="left:850px;top:500px" width="99" height="30">
<g fill="#1ca6e0"><rect x="8.5" y="15.5" width="2.8" height="4.5"/><rect x="13.3" y="13" width="2.8" height="7"/><rect x="18.2" y="10.5" width="2.9" height="9.5"/><rect x="23.2" y="8.2" width="3.1" height="11.8"/><rect x="28.3" y="7.3" width="3.5" height="12.7"/></g>
<text x="36.8" y="19.7" font-family="Liberation Sans" font-size="15" font-weight="bold" font-style="italic" fill="#fff" stroke="#fff" stroke-width="0.9" letter-spacing="0.6" transform="scale(1.15,1)">HD</text>
<g fill="#fff"><path d="M77 8h5l-5 5zM89.5 8h-5l5 5zM77 20h5l-5-5zM89.5 20h-5l5-5z"/></g><g stroke="#fff" stroke-width="2.1"><path d="M79 10l2.6 2.6M87.5 10l-2.6 2.6M79 18l2.6-2.6M87.5 18l-2.6-2.6"/></g>
</svg>
</body></html>
